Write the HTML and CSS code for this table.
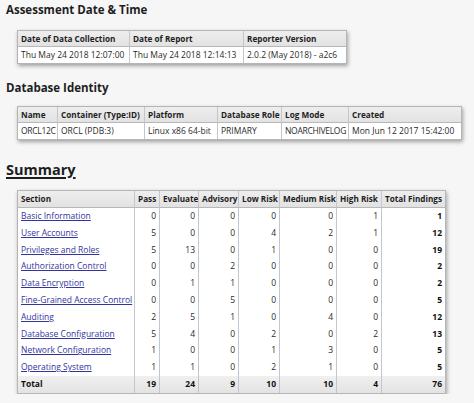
FILE: index.html
```html
<!DOCTYPE html>
<html>
<head>
<meta charset="utf-8">
<link rel="stylesheet" href="styles.css">
</head>
<body>
<h2 class="title title-first">Assessment Date &amp; Time</h2>
<table class="grid t-date">
  <colgroup><col class="w112"><col class="w114"><col class="w102"></colgroup>
  <thead><tr><th>Date of Data Collection</th><th>Date of Report</th><th>Reporter Version</th></tr></thead>
  <tbody><tr><td>Thu May 24 2018 12:07:00</td><td>Thu May 24 2018 12:14:13</td><td>2.0.2 (May 2018) - a2c6</td></tr></tbody>
</table>

<h2 class="title title-db">Database Identity</h2>
<table class="grid t-db">
  <colgroup><col class="w40"><col class="w87"><col class="w73"><col class="w64"><col class="w67"><col class="w112"></colgroup>
  <thead><tr><th>Name</th><th>Container (Type:ID)</th><th>Platform</th><th>Database Role</th><th>Log Mode</th><th>Created</th></tr></thead>
  <tbody><tr><td class="tight">ORCL12C</td><td>ORCL (PDB:3)</td><td>Linux x86 64-bit</td><td>PRIMARY</td><td class="tight">NOARCHIVELOG</td><td>Mon Jun 12 2017 15:42:00</td></tr></tbody>
</table>

<h1 class="summary-title">Summary</h1>
<table class="grid t-sum">
  <colgroup><col class="w117"><col class="w25"><col class="w39"><col class="w40"><col class="w41"><col class="w57"><col class="w45"><col class="w63"></colgroup>
  <thead><tr><th>Section</th><th>Pass</th><th>Evaluate</th><th>Advisory</th><th>Low Risk</th><th>Medium Risk</th><th>High Risk</th><th>Total Findings</th></tr></thead>
  <tbody>
    <tr><td><a href="#">Basic Information</a></td><td class="n">0</td><td class="n">0</td><td class="n">0</td><td class="n">0</td><td class="n">0</td><td class="n">1</td><td class="n b">1</td></tr>
    <tr><td><a href="#">User Accounts</a></td><td class="n">5</td><td class="n">0</td><td class="n">0</td><td class="n">4</td><td class="n">2</td><td class="n">1</td><td class="n b">12</td></tr>
    <tr><td><a href="#">Privileges and Roles</a></td><td class="n">5</td><td class="n">13</td><td class="n">0</td><td class="n">1</td><td class="n">0</td><td class="n">0</td><td class="n b">19</td></tr>
    <tr><td><a href="#">Authorization Control</a></td><td class="n">0</td><td class="n">0</td><td class="n">2</td><td class="n">0</td><td class="n">0</td><td class="n">0</td><td class="n b">2</td></tr>
    <tr><td><a href="#">Data Encryption</a></td><td class="n">0</td><td class="n">1</td><td class="n">1</td><td class="n">0</td><td class="n">0</td><td class="n">0</td><td class="n b">2</td></tr>
    <tr><td><a href="#">Fine-Grained Access Control</a></td><td class="n">0</td><td class="n">0</td><td class="n">5</td><td class="n">0</td><td class="n">0</td><td class="n">0</td><td class="n b">5</td></tr>
    <tr><td><a href="#">Auditing</a></td><td class="n">2</td><td class="n">5</td><td class="n">1</td><td class="n">0</td><td class="n">4</td><td class="n">0</td><td class="n b">12</td></tr>
    <tr><td><a href="#">Database Configuration</a></td><td class="n">5</td><td class="n">4</td><td class="n">0</td><td class="n">2</td><td class="n">0</td><td class="n">2</td><td class="n b">13</td></tr>
    <tr><td><a href="#">Network Configuration</a></td><td class="n">1</td><td class="n">0</td><td class="n">0</td><td class="n">1</td><td class="n">3</td><td class="n">0</td><td class="n b">5</td></tr>
    <tr><td><a href="#">Operating System</a></td><td class="n">1</td><td class="n">1</td><td class="n">0</td><td class="n">2</td><td class="n">1</td><td class="n">0</td><td class="n b">5</td></tr>
    <tr class="total"><td>Total</td><td class="n">19</td><td class="n">24</td><td class="n">9</td><td class="n">10</td><td class="n">10</td><td class="n">4</td><td class="n">76</td></tr>
  </tbody>
</table>
</body>
</html>
```
FILE: styles.css
```css
html, body {
  margin: 0;
  background: #f6f6f6;
}
body {
  padding: 3px 0 0 6px;
  font-family: "Open Sans", "Noto Sans", sans-serif;
  color: #222;
}
.title {
  margin: 0;
  font-size: 11.5px;
  line-height: 14px;
  font-weight: 700;
  color: #1e1e1e;
}
.title-db { margin-top: 17px; }
.summary-title {
  margin: 21px 0 0 0;
  font-size: 14.5px;
  line-height: 18px;
  font-weight: 700;
  color: #1e1e1e;
  text-decoration: underline;
  text-decoration-thickness: 1.5px;
  text-underline-offset: 2px;
  display: inline-block;
}
.grid {
  margin: 13px 0 0 11px;
  border-collapse: separate;
  border-spacing: 0;
  table-layout: fixed;
  background: #fff;
  border: 1px solid #b5b5b5;
  box-shadow: 1px 2px 4px rgba(0, 0, 0, 0.35);
  font-size: 8.5px;
  color: #2a2a2a;
}
.t-date { width: 330px; }
.t-db { width: 445px; margin-top: 11px; }
.t-sum { width: 429px; margin-top: 10px; }

.w112 { width: 112px; }
.w114 { width: 114px; }
.w102 { width: 102px; }
.w40 { width: 40px; }
.w87 { width: 87px; }
.w73 { width: 73px; }
.w64 { width: 64px; }
.w67 { width: 67px; }
.w117 { width: 117px; }
.w25 { width: 25px; }
.w39 { width: 39px; }
.w41 { width: 41px; }
.w57 { width: 57px; }
.w45 { width: 45px; }
.w63 { width: 63px; }

.grid th, .grid td {
  padding: 0 3px;
  border-right: 1px solid #c3c7cb;
  white-space: nowrap;
  overflow: hidden;
  text-align: left;
}
.grid th:last-child, .grid td:last-child { border-right: none; }
.grid th {
  height: 15px;
  line-height: 15px;
  padding: 0 2px 0 3px;
  font-size: 8.2px;
  font-weight: 700;
  color: #1e1e1e;
  background: linear-gradient(#eeeeee, #e2e2e2);
  border-bottom: 1px solid #b8b8b8;
}
.grid td {
  height: 16px;
  line-height: 16px;
}
.t-db td { padding: 0 2px 0 3px; }
.t-db td.tight { letter-spacing: -0.3px; }
.t-sum th {
  height: 16px;
  line-height: 16px;
}
.t-sum td {
  height: 16.8px;
  line-height: 16.8px;
}
.grid td.n { text-align: right; }
.grid td.b { font-weight: 700; color: #111; }
.grid a {
  color: #34349e;
  text-decoration: underline;
}
.total td {
  font-weight: 700;
  color: #111;
  background: linear-gradient(#f0f0f0, #e3e3e3);
}
```
